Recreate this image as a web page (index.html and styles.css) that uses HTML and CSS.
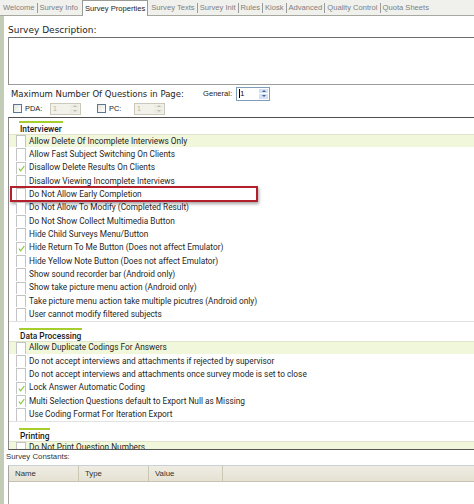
FILE: index.html
```html
<!DOCTYPE html>
<html>
<head>
<meta charset="utf-8">
<title>Survey Properties</title>
<link rel="stylesheet" href="styles.css">
</head>
<body>
<div class="window">
  <div class="tabs">
    <span class="tab">Welcome</span><span class="sep"></span>
    <span class="tab">Survey Info</span>
    <span class="tab selected">Survey Properties</span>
    <span class="tab">Survey Texts</span><span class="sep"></span>
    <span class="tab">Survey Init</span><span class="sep"></span>
    <span class="tab">Rules</span><span class="sep"></span>
    <span class="tab">Kiosk</span><span class="sep"></span>
    <span class="tab">Advanced</span><span class="sep"></span>
    <span class="tab">Quality Control</span><span class="sep"></span>
    <span class="tab">Quota Sheets</span>
  </div>
  <div class="main">
    <div class="strip"></div>
    <div class="panel">
      <div class="desc-label">Survey Description:</div>
      <div class="desc-box"></div>

      <div class="max-row">
        <span class="max-label">Maximum Number Of Questions in Page:</span>
        <span class="small-label gen-label">General:</span>
        <div class="spin">
          <span class="spin-val"><span class="caret"></span>1</span>
          <span class="spin-btns"><span class="up"></span><span class="dn"></span></span>
        </div>
      </div>

      <div class="opt-row">
        <span class="xcb"></span>
        <span class="small-label opt-label">PDA:</span>
        <div class="spin disabled">
          <span class="spin-val">1</span>
          <span class="spin-btns"><span class="up"></span><span class="dn"></span></span>
        </div>
        <span class="xcb second"></span>
        <span class="small-label opt-label">PC:</span>
        <div class="spin disabled">
          <span class="spin-val">1</span>
          <span class="spin-btns"><span class="up"></span><span class="dn"></span></span>
        </div>
      </div>

      <div class="list">
        <div class="group first">
          <div class="group-head"><span class="group-title">Interviewer</span></div>
          <div class="row hl"><span class="cb"></span><span class="row-text">Allow Delete Of Incomplete Interviews Only</span></div>
          <div class="row"><span class="cb"></span><span class="row-text">Allow Fast Subject Switching On Clients</span></div>
          <div class="row"><span class="cb"><svg class="tick" viewBox="0 0 8 8"><polyline points="1,4.2 3,6.6 7.2,1.2"/></svg></span><span class="row-text">Disallow Delete Results On Clients</span></div>
          <div class="row"><span class="cb"></span><span class="row-text">Disallow Viewing Incomplete Interviews</span></div>
          <div class="row"><span class="cb"></span><span class="row-text">Do Not Allow Early Completion</span><span class="mark"></span></div>
          <div class="row"><span class="cb"></span><span class="row-text">Do Not Allow To Modify (Completed Result)</span></div>
          <div class="row"><span class="cb"></span><span class="row-text">Do Not Show Collect Multimedia Button</span></div>
          <div class="row"><span class="cb"></span><span class="row-text">Hide Child Surveys Menu/Button</span></div>
          <div class="row"><span class="cb"><svg class="tick" viewBox="0 0 8 8"><polyline points="1,4.2 3,6.6 7.2,1.2"/></svg></span><span class="row-text">Hide Return To Me Button (Does not affect Emulator)</span></div>
          <div class="row"><span class="cb"></span><span class="row-text">Hide Yellow Note Button (Does not affect Emulator)</span></div>
          <div class="row"><span class="cb"></span><span class="row-text">Show sound recorder bar (Android only)</span></div>
          <div class="row"><span class="cb"></span><span class="row-text">Show take picture menu action (Android only)</span></div>
          <div class="row"><span class="cb"></span><span class="row-text">Take picture menu action take multiple picutres (Android only)</span></div>
          <div class="row"><span class="cb"></span><span class="row-text">User cannot modify filtered subjects</span></div>
        </div>
        <div class="group">
          <div class="group-head"><span class="group-title">Data Processing</span></div>
          <div class="row hl"><span class="cb"></span><span class="row-text">Allow Duplicate Codings For Answers</span></div>
          <div class="row"><span class="cb"></span><span class="row-text">Do not accept interviews and attachments if rejected by supervisor</span></div>
          <div class="row"><span class="cb"></span><span class="row-text">Do not accept interviews and attachments once survey mode is set to close</span></div>
          <div class="row"><span class="cb"><svg class="tick" viewBox="0 0 8 8"><polyline points="1,4.2 3,6.6 7.2,1.2"/></svg></span><span class="row-text">Lock Answer Automatic Coding</span></div>
          <div class="row"><span class="cb"><svg class="tick" viewBox="0 0 8 8"><polyline points="1,4.2 3,6.6 7.2,1.2"/></svg></span><span class="row-text">Multi Selection Questions default to Export Null as Missing</span></div>
          <div class="row"><span class="cb"></span><span class="row-text">Use Coding Format For Iteration Export</span></div>
        </div>
        <div class="group">
          <div class="group-head"><span class="group-title">Printing</span></div>
          <div class="row hl"><span class="cb"></span><span class="row-text">Do Not Print Question Numbers</span></div>
        </div>
      </div>

      <div class="const-label">Survey Constants:</div>
      <div class="table">
        <div class="thead">
          <span class="th c-name">Name</span>
          <span class="th c-type">Type</span>
          <span class="th c-value">Value</span>
          <span class="th c-rest"></span>
        </div>
      </div>
    </div>
  </div>
</div>
</body>
</html>
```

FILE: styles.css
```css
* { box-sizing: border-box; }
html, body { margin: 0; padding: 0; }
body {
  width: 474px;
  height: 504px;
  overflow: hidden;
  background: #ffffff;
  font-family: "Liberation Sans", Arial, sans-serif;
  color: #222;
}
.window {
  width: 474px;
  height: 504px;
  display: flex;
  flex-direction: column;
}

/* tabs */
.tabs {
  flex: none;
  height: 16px;
  display: flex;
  align-items: flex-end;
  padding-left: 1px;
  background: #f0f0ec;
  border-bottom: 1px solid #a7a9a0;
  font-size: 7.6px;
  color: #808080;
  white-space: nowrap;
}
.tab {
  height: 14px;
  line-height: 13px;
  padding: 0 2px;
}
.tab.selected {
  height: 16px;
  line-height: 15px;
  margin: 0 1px -1px 2px;
  padding: 0 2px;
  background: #ffffff;
  border: 1px solid #9a9d95;
  border-bottom: none;
  color: #1e1e1e;
  position: relative;
}
.sep {
  width: 1px;
  height: 10px;
  margin-bottom: 2px;
  background: #9a9a9a;
}

/* main */
.main {
  flex: 1;
  display: flex;
  min-height: 0;
}
.strip {
  flex: none;
  width: 4px;
  background: #c3ccb6;
}
.panel {
  flex: 1;
  min-width: 0;
  display: flex;
  flex-direction: column;
  padding-left: 4px;
  overflow: hidden;
}
.desc-label {
  margin-top: 8px;
  line-height: 12px;
  height: 12px;
  font-family: "DejaVu Sans", sans-serif;
  font-size: 9px;
  color: #1e1e1e;
}
.desc-box {
  margin-top: 1px;
  height: 48px;
  margin-right: -6px;
  border-top: 1px solid #6e6e6e;
  border-left: 1px solid #8e8e8e;
  border-bottom: 1px solid #9c9c9c;
  background: #fff;
}

.max-row {
  height: 17px;
  display: flex;
  align-items: center;
  padding-left: 3px;
}
.max-label {
  width: 192px;
  font-family: "DejaVu Sans", sans-serif;
  font-size: 8.5px;
  color: #1e1e1e;
  white-space: nowrap;
}
.small-label {
  font-size: 7.6px;
  color: #222;
  white-space: nowrap;
}
.gen-label { width: 33px; }

.spin {
  width: 34px;
  height: 14px;
  display: flex;
  border: 1px solid #7f9db9;
  background: #fff;
}
.spin-val {
  flex: 1;
  display: flex;
  align-items: center;
  padding-left: 2px;
  font-size: 8px;
  color: #111;
}
.caret {
  width: 1px;
  height: 9px;
  background: #000;
}
.spin-btns {
  width: 9px;
  margin: 1px;
  display: flex;
  flex-direction: column;
  gap: 1px;
}
.spin-btns .up, .spin-btns .dn {
  flex: 1;
  display: flex;
  align-items: center;
  justify-content: center;
  background: #d4e0f5;
}
.spin-btns .up::after {
  content: "";
  border-left: 2px solid transparent;
  border-right: 2px solid transparent;
  border-bottom: 2px solid #4d6185;
}
.spin-btns .dn::after {
  content: "";
  border-left: 2px solid transparent;
  border-right: 2px solid transparent;
  border-top: 2px solid #4d6185;
}
.spin.disabled {
  width: 31px;
  height: 12px;
  border-color: #cbc9bb;
  background: #f3f2ea;
}
.spin.disabled .spin-val { color: #b8b4a2; font-size: 7px; }
.spin.disabled .spin-btns .up, .spin.disabled .spin-btns .dn { background: #ecebe3; }
.spin.disabled .spin-btns .up::after { border-bottom-color: #c2bfae; }
.spin.disabled .spin-btns .dn::after { border-top-color: #c2bfae; }

.opt-row {
  height: 13px;
  display: flex;
  align-items: center;
  padding-left: 5px;
}
.xcb {
  width: 9px;
  height: 9px;
  border: 1px solid #5b7794;
  background: linear-gradient(135deg, #e4e4dc, #ffffff);
}
.xcb.second { margin-left: 16px; }
.opt-label {
  width: 28px;
  padding-left: 3px;
  font-size: 7.4px;
}

/* list */
.list {
  margin-top: 2px;
  height: 333px;
  flex: none;
  margin-right: -6px;
  border-top: 1px solid #4f4f4f;
  border-left: 1px solid #8a8a8a;
  border-bottom: 1px solid #555;
  overflow: hidden;
  background: #fff;
}
.group-head {
  height: 20px;
  padding-top: 3px;
  border-top: 1px solid #e2e2e2;
  padding-left: 10px;
}
.group.first .group-head {
  height: 16px;
  padding-top: 0;
  border-top: none;
}
.group-title {
  display: inline-block;
  height: 16px;
  line-height: 13px;
  padding: 0 1px;
  border-top: 2px solid #a6cf2e;
  font-family: Roboto, "Liberation Sans", sans-serif;
  font-size: 8.4px;
  font-weight: 500;
  color: #1a1a1a;
}
.row {
  position: relative;
  height: 13.33px;
  display: flex;
  align-items: center;
}
.row.hl {
  background: #f1f7da;
  box-shadow: inset 0 1px 0 #dfe4cb;
}
.cb {
  flex: none;
  align-self: flex-start;
  margin-top: 1px;
  margin-left: 7px;
  width: 10px;
  height: 12.33px;
  border: 1px solid #c4c4c4;
  border-bottom: none;
  background: #fff;
  display: flex;
  align-items: center;
  justify-content: center;
}
.tick {
  width: 7px;
  height: 7px;
  fill: none;
  stroke: #8cc63f;
  stroke-width: 1.3;
}
.row-text {
  margin-left: 3px;
  font-family: Roboto, "Liberation Sans", sans-serif;
  font-size: 8.3px;
  font-weight: 400;
  color: #1f1f1f;
  white-space: nowrap;
}
.mark {
  position: absolute;
  left: 1px;
  top: -1.5px;
  width: 248px;
  height: 16px;
  border: 2px solid #b31f2b;
  box-shadow: 1px 2px 3px rgba(0, 0, 0, 0.35);
  pointer-events: none;
}

/* constants */
.const-label {
  margin-top: 1px;
  margin-left: -2px;
  height: 12px;
  line-height: 12px;
  font-size: 7.8px;
  color: #333;
}
.table {
  margin-top: 2px;
  flex: 1;
  margin-right: -6px;
  border-top: 1px solid #c9d0d8;
  border-left: 1px solid #a5a5a5;
  background: #fff;
}
.thead {
  height: 16px;
  display: flex;
  background: linear-gradient(#efede3, #e5e2d3);
  border-bottom: 1px solid #c6c3b3;
}
.th {
  height: 15px;
  line-height: 15px;
  padding-left: 6px;
  font-size: 7.8px;
  color: #333;
  border-right: 1px solid #c9c6b6;
}
.c-name { width: 70px; }
.c-type { width: 70px; }
.c-value { width: 74px; }
.c-rest { flex: 1; border-right: none; }
```
